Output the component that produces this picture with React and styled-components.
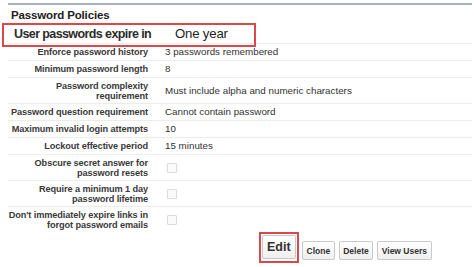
import React from "react"
import styled, { createGlobalStyle, css } from "styled-components"

const GlobalStyle = createGlobalStyle`
  html, body {
    margin: 0;
    padding: 0;
    background: #ffffff;
  }
  body {
    font-family: "Liberation Sans", Arial, sans-serif;
    color: #333;
  }
`

const Page = styled.div`
  width: 474px;
  height: 267px;
  padding: 3px 2px 0 2px;
  box-sizing: border-box;
  overflow: hidden;
`

const Panel = styled.div`
  margin-left: 6px;
  border-top: 2px solid #a9b3bf;
`

const Title = styled.h2`
  margin: 0;
  padding: 3px 0 0 3px;
  height: 15px;
  font-size: 11.5px;
  font-weight: bold;
  letter-spacing: -0.15px;
  color: #222;
  line-height: 15px;
  white-space: nowrap;
`

const Highlight = styled.div`
  position: relative;
  display: flex;
  align-items: center;
  height: 19px;
  padding: 1px 0 0 6px;
  border-bottom: 1px solid #ececec;
  white-space: nowrap;

  &::after {
    content: "";
    position: absolute;
    left: -6px;
    top: 0;
    bottom: -4px;
    width: 254px;
    box-sizing: border-box;
    border: 2px solid #d9484a;
    pointer-events: none;
  }
`

const HighlightLabel = styled.span`
  font-size: 12.5px;
  font-weight: bold;
  color: #2b2b2b;
  letter-spacing: -0.6px;
`

const HighlightValue = styled.span`
  margin-left: 24px;
  font-size: 13.2px;
  letter-spacing: -0.2px;
  color: #222;
`

const Row = styled.div`
  display: grid;
  grid-template-columns: 140px 1fr;
  column-gap: 17px;
  align-items: center;
  height: ${p => (p.tall ? 25 : 16)}px;
  border-bottom: ${p => (p.last ? "none" : "1px solid #ececec")};
`

const Label = styled.div`
  text-align: right;
  font-size: 9.2px;
  font-weight: bold;
  letter-spacing: -0.1px;
  line-height: 10px;
  color: #3a3a3a;
  white-space: nowrap;
`

const Value = styled.div`
  font-size: 9.8px;
  line-height: 10px;
  color: #333;
  white-space: nowrap;
`

const Check = styled.span`
  display: block;
  width: 8px;
  height: 8px;
  margin-left: 2px;
  border: 1px solid #dcdcdc;
  border-radius: 1px;
  background: #fafafa;
`

const Buttons = styled.div`
  display: flex;
  align-items: flex-end;
  gap: 4px;
  margin-left: 251px;
`

const EditFrame = styled.div`
  border: 2px solid #d9484a;
  padding: 1px 1px 2px 1px;
  margin-right: -1px;
`

const Button = styled.button`
  font-family: "Liberation Sans", Arial, sans-serif;
  font-weight: bold;
  color: #333;
  background: linear-gradient(#ffffff, #efefef);
  border: 1px solid #c9c9c9;
  border-radius: 2px;
  padding: 0 ${p => (p.tight ? 3 : 4)}px;
  height: 19px;
  margin-bottom: 3px;
  font-size: 8.5px;
  cursor: pointer;
  ${p =>
    p.big &&
    css`
      height: 24px;
      margin-bottom: 0;
      font-size: 12.5px;
      padding: 0 4px;
    `}
`

const rows = [
  { label: "Enforce password history", value: "3 passwords remembered" },
  { label: "Minimum password length", value: "8" },
  { label: ["Password complexity", "requirement"], value: "Must include alpha and numeric characters", tall: true },
  { label: "Password question requirement", value: "Cannot contain password" },
  { label: "Maximum invalid login attempts", value: "10" },
  { label: "Lockout effective period", value: "15 minutes" },
  { label: ["Obscure secret answer for", "password resets"], check: true, tall: true },
  { label: ["Require a minimum 1 day", "password lifetime"], check: true, tall: true },
  { label: ["Don't immediately expire links in", "forgot password emails"], check: true, tall: true, last: true },
]

export default function App() {
  return (
    <Page>
      <GlobalStyle />
      <Panel>
        <Title>Password Policies</Title>
        <Highlight>
          <HighlightLabel>User passwords expire in</HighlightLabel>
          <HighlightValue>One year</HighlightValue>
        </Highlight>
        {rows.map((r, i) => (
          <Row key={i} tall={r.tall} last={r.last}>
            <Label>
              {Array.isArray(r.label)
                ? r.label.map((l, j) => <div key={j}>{l}</div>)
                : r.label}
            </Label>
            <Value>{r.check ? <Check /> : r.value}</Value>
          </Row>
        ))}
        <Buttons>
          <EditFrame>
            <Button big>Edit</Button>
          </EditFrame>
          <Button>Clone</Button>
          <Button tight>Delete</Button>
          <Button>View Users</Button>
        </Buttons>
      </Panel>
    </Page>
  )
}
